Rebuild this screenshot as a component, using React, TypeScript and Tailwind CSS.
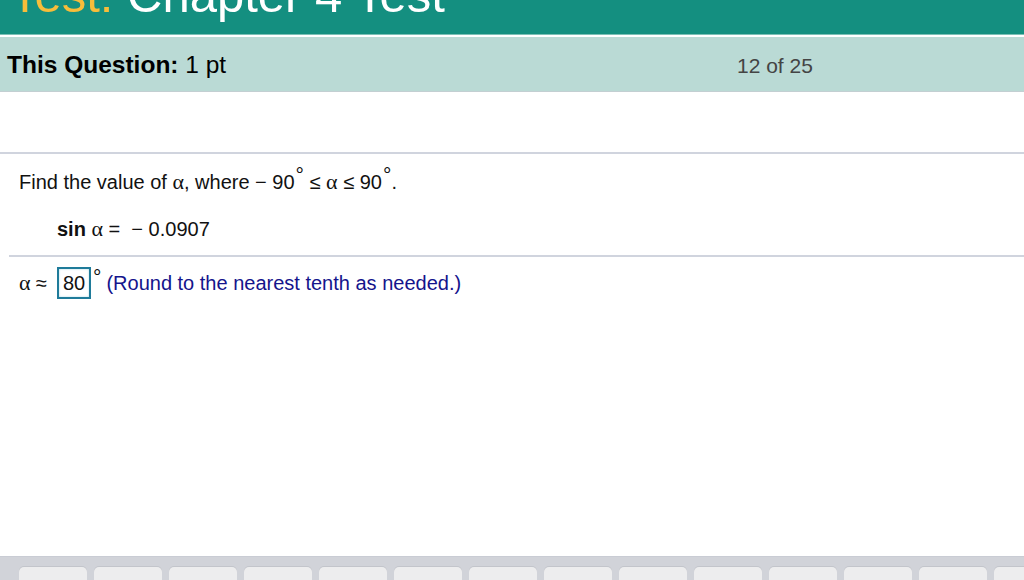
import React from "react";

const KEYS = Array.from({ length: 14 }, (_, i) => i);

function Alpha() {
  return <span className="font-['Liberation_Serif',serif] text-[22px]">α</span>;
}

function Deg() {
  return <span className="text-[21px] relative top-[-7px] leading-none ml-[1px]">°</span>;
}

export default function App() {
  return (
    <div className="w-[1024px] h-[580px] overflow-hidden bg-white font-['Liberation_Sans',Arial,sans-serif] flex flex-col">
      {/* title bar, scrolled so the title is cut at the top */}
      <div className="h-[34px] shrink-0 bg-[#148f80] overflow-hidden">
        <div className="mt-[-29px] ml-[10px] text-[49px] leading-[48px] whitespace-nowrap">
          <span className="text-[#f7bd3a]">Test:</span>
          <span className="text-white"> Chapter 4 Test</span>
        </div>
      </div>
      <div className="h-px shrink-0 bg-[#7cc0b6]" />
      <div className="h-[2px] shrink-0 bg-white" />

      {/* question info band */}
      <div className="h-[55px] shrink-0 bg-[#badad5] border-b border-[#c3cfd2] flex items-center pl-[7px] pt-[3px]">
        <div className="w-[730px] text-[24.5px] text-black">
          <span className="font-bold">This Question:</span> 1 pt
        </div>
        <div className="text-[21px] text-[#444]">12 of 25</div>
      </div>

      <div className="h-[60px] shrink-0" />
      <div className="h-[2px] shrink-0 bg-[#d0d4de]" />

      {/* question body */}
      <div className="flex-1 flex flex-col text-[20px]">
        <div className="pl-[19px] pt-[14px] text-[#111] leading-[28px] whitespace-nowrap">
          Find the value of <Alpha />, where − 90<Deg /> ≤ <Alpha /> ≤ 90<Deg />.
        </div>
        <div className="pl-[57px] pt-[19px] text-[#111] leading-[28px] whitespace-nowrap">
          <span className="font-bold">sin</span> <Alpha /> = &nbsp;− 0.0907
        </div>
        <div className="ml-[9px] mt-[12px] h-[2px] bg-[#d0d4de]" />
        <div className="pl-[19px] pt-[9px] flex items-center text-[20px] whitespace-nowrap">
          <span className="text-[#111] w-[38px]">
            <Alpha /> ≈
          </span>
          <div className="w-[34px] h-[32px] border-2 border-[#1f7b9a] flex items-center justify-center text-[#111] shadow-[inset_0_0_2px_#9fd3e2]">
            80
          </div>
          <span className="text-[#111] text-[21px] self-start mt-[-5px] ml-[2px]">°</span>
          <span className="text-[#14148c] ml-[5px]">(Round to the nearest tenth as needed.)</span>
        </div>
      </div>

      {/* on-screen keyboard peeking in */}
      <div className="h-[24px] shrink-0 bg-[#d1d3d9] border-t border-[#c9ccd4] flex gap-[7px] pl-[19px] pt-[10px] overflow-hidden">
        {KEYS.map((k) => (
          <div
            key={k}
            className="w-[68px] h-[20px] shrink-0 rounded-t-[5px] bg-[#ededee] shadow-[0_-1px_0_#c3c5cb]"
          />
        ))}
      </div>
    </div>
  );
}
